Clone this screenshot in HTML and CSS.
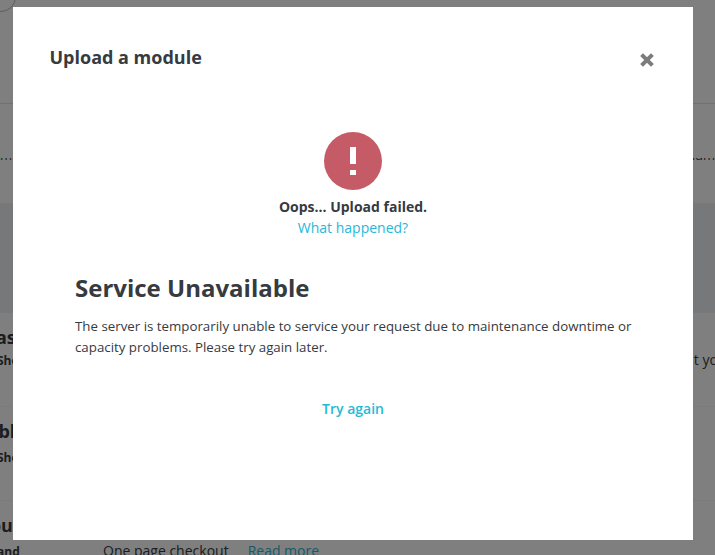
FILE: index.html
```html
<!DOCTYPE html>
<html lang="en">
<head>
<meta charset="utf-8">
<title>Upload a module</title>
<link rel="stylesheet" href="styles.css">
</head>
<body>
<div class="page">
  <header class="page-head"><span class="head-circle"></span></header>
  <div class="tabs">
    <span class="tabs-clip"><span class="tabs-text">minimum order</span></span>
    <span class="tabs-clip"><span class="tabs-text">maximum</span></span>
  </div>
  <section class="band"></section>
  <section class="row">
    <div class="row-left"><div class="row-title">Fast</div><div class="row-sub">Shop</div></div>
    <div class="row-end">at your shop</div>
  </section>
  <section class="row">
    <div class="row-left"><div class="row-title">Able</div><div class="row-sub low">Shop</div></div>
  </section>
  <section class="row">
    <div class="row-left"><div class="row-title tight">Jour</div><div class="row-sub low">and</div></div>
    <div class="row-main"><span>One page checkout</span><a class="more">Read more</a></div>
  </section>
</div>
<div class="backdrop"></div>
<div class="modal">
  <div class="modal-head">
    <h2 class="modal-title">Upload a module</h2>
    <svg class="close" viewBox="0 0 16 16" width="16" height="16" aria-label="Close"><path d="M2.6 2.6 13.4 13.4M13.4 2.6 2.6 13.4" fill="none" stroke="#7c7c7c" stroke-width="4"/></svg>
  </div>
  <div class="status">
    <div class="alert-circle"><span class="alert-bar"></span><span class="alert-dot"></span></div>
    <div class="status-text">Oops... Upload failed.</div>
    <a class="status-link">What happened?</a>
  </div>
  <div class="message">
    <h1 class="message-title">Service Unavailable</h1>
    <p class="message-body">The server is temporarily unable to service your request due to maintenance downtime or capacity problems. Please try again later.</p>
  </div>
  <a class="retry">Try again</a>
</div>
</body>
</html>
```
FILE: styles.css
```css
* { box-sizing: border-box; }
html, body { margin: 0; height: 100%; }
body {
  width: 715px;
  height: 555px;
  overflow: hidden;
  position: relative;
  background: #fff;
  font-family: "Open Sans", sans-serif;
  color: #363a41;
}
.page { height: 555px; overflow: hidden; }
.page-head {
  height: 104px;
  border-bottom: 1px solid #e2e2e2;
  position: relative;
}
.head-circle {
  position: absolute;
  left: -14px;
  top: -18px;
  width: 30px;
  height: 30px;
  border: 1px solid #bbb;
  border-radius: 50%;
}
.tabs {
  height: 99px;
  display: flex;
  justify-content: space-between;
  font-size: 13px;
  padding-top: 54px;
}
.tabs-clip {
  display: block;
  height: 3px;
  overflow: hidden;
  white-space: nowrap;
}
.tabs-text { display: block; margin-top: -3px; line-height: 0; }
.band { height: 110px; background: #eff1f2; }
.row {
  height: 94px;
  display: flex;
  border-bottom: 1px solid #f6f6f6;
}
.row-left { width: 100px; flex: none; padding-top: 11px; }
.row-title { margin-left: -14px; font-size: 18px; font-weight: 700; line-height: 27px; white-space: nowrap; }
.row-title.tight { margin-left: -16px; }
.row-sub { margin-left: -3px; font-size: 12px; font-weight: 700; line-height: 16px; margin-top: 2px; }
.row-sub.low { margin-top: 5px; }
.row-main { font-size: 14px; padding-top: 40px; margin-left: 3px; display: flex; gap: 19px; white-space: nowrap; }
.row-end { width: 29px; margin-left: auto; flex: none; padding-top: 37px; font-size: 14px; line-height: 20px; white-space: nowrap; }
.more { color: #25b9d7; }
.backdrop {
  position: absolute;
  inset: 0;
  background: rgba(0, 0, 0, .5);
}
.modal {
  position: absolute;
  left: 13px;
  top: 7px;
  width: 680px;
  height: 533px;
  background: #fff;
  padding: 37px 37px 0;
  display: flex;
  flex-direction: column;
}
.modal-head { display: flex; justify-content: space-between; align-items: flex-start; }
.modal-title { margin: 0 0 0 -0.5px; font-size: 18px; font-weight: 700; line-height: 27px; }
.close { margin-top: 8px; margin-right: 1px; }
.status {
  display: flex;
  flex-direction: column;
  align-items: center;
  margin-top: 61px;
}
.alert-circle {
  width: 58px;
  height: 58px;
  border-radius: 50%;
  background: #c45b66;
  display: flex;
  flex-direction: column;
  align-items: center;
  padding-top: 15px;
}
.alert-bar { width: 6px; height: 17px; background: #fff; }
.alert-dot { width: 6px; height: 5px; background: #fff; margin-top: 6px; }
.status-text { font-size: 14px; font-weight: 700; line-height: 20px; margin-top: 7px; }
.status-link { font-size: 14px; line-height: 20px; margin-top: 1px; color: #25b9d7; }
.message { padding: 0 20px 0 25px; margin-top: 32px; }
.message-title { margin: 0; font-size: 24px; font-weight: 700; line-height: 36px; }
.message-body { margin: 10px 0 0; font-size: 13.3px; line-height: 21px; }
.retry {
  align-self: center;
  margin-top: 41px;
  font-size: 14px;
  font-weight: 600;
  line-height: 20px;
  color: #25b9d7;
}
```
